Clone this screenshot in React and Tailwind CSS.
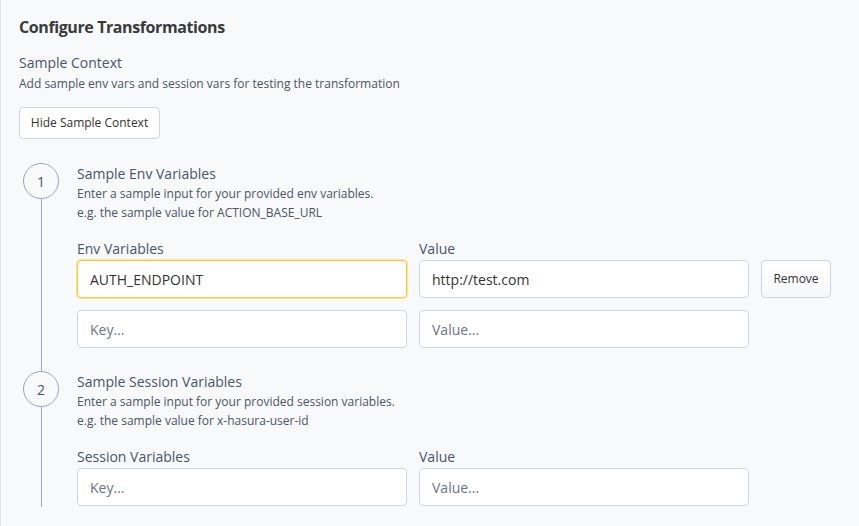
import React from "react";

const font = { fontFamily: "'Open Sans', 'Noto Sans', sans-serif" };

function Input({ value, placeholder, focused }) {
  return (
    <div
      className={
        "h-[38px] rounded-[4px] bg-white flex items-center px-[12px] text-[14px] " +
        (focused
          ? "border border-[#f5c842] shadow-[0_0_0_1px_#fde68a]"
          : "border border-[#cfd6e2]")
      }
    >
      {value ? (
        <span className="text-[#333333]">{value}</span>
      ) : (
        <span className="text-[#6b7488]">{placeholder}</span>
      )}
    </div>
  );
}

function Step({ n, title, desc1, desc2, label, last, children }) {
  return (
    <div className="flex">
      <div className="w-[44px] flex flex-col items-center shrink-0">
        <div className="w-[36px] h-[36px] rounded-full border border-[#9aa6bb] flex items-center justify-center text-[14px] text-[#4a5568] bg-[#f8f9fb] shrink-0">
          {n}
        </div>
        <div className={"w-px bg-[#a0aabb] flex-1" + (last ? " mb-[-1px]" : "")} />
      </div>
      <div className={"ml-[14px] flex-1 " + (last ? "pb-0" : "pb-[23px]")}>
        <div className="text-[14px] leading-[20px] text-[#4a5568] pt-px">{title}</div>
        <div className="text-[12px] leading-[19px] text-[#4a5568]">{desc1}</div>
        <div className="text-[12px] leading-[19px] text-[#4a5568]">{desc2}</div>
        <div className="mt-[17px] grid grid-cols-[330px_330px_70px] gap-x-[12px]">
          <div className="text-[14px] leading-[20px] text-[#4a5568]">{label}</div>
          <div className="text-[14px] leading-[20px] text-[#4a5568]">Value</div>
          <div />
        </div>
        <div className="mt-[1px] grid grid-cols-[330px_330px_70px] gap-x-[12px] gap-y-[12px]">
          {children}
        </div>
      </div>
    </div>
  );
}

export default function App() {
  return (
    <div
      style={font}
      className="w-[859px] h-[526px] bg-[#f8f9fb] border-l border-[#e2e5ea] pl-[18px] pt-[15px] overflow-hidden"
    >
      <div className="text-[16px] leading-[24px] font-bold tracking-[-0.4px] text-[#3a3a3a]">
        Configure Transformations
      </div>
      <div className="mt-[14px] text-[14px] leading-[20px] text-[#4a5568]">Sample Context</div>
      <div className="mt-[3px] text-[12px] leading-[16px] text-[#4a5568]">
        Add sample env vars and session vars for testing the transformation
      </div>
      <div className="mt-[15px]">
        <button className="h-[32px] w-[141px] rounded-[4px] bg-white border border-[#cfd6e2] text-[12px] text-[#333333]">
          Hide Sample Context
        </button>
      </div>
      <div className="mt-[24px]">
        <Step
          n="1"
          title="Sample Env Variables"
          desc1="Enter a sample input for your provided env variables."
          desc2="e.g. the sample value for ACTION_BASE_URL"
          label="Env Variables"
        >
          <Input value="AUTH_ENDPOINT" focused />
          <Input value="http://test.com" />
          <button className="h-[38px] rounded-[4px] bg-gradient-to-b from-white to-[#f7f8fa] border border-[#cfd6e2] text-[12px] text-[#333333]">
            Remove
          </button>
          <Input placeholder="Key..." />
          <Input placeholder="Value..." />
          <div />
        </Step>
        <Step
          n="2"
          title="Sample Session Variables"
          desc1="Enter a sample input for your provided session variables."
          desc2="e.g. the sample value for x-hasura-user-id"
          label="Session Variables"
          last
        >
          <Input placeholder="Key..." />
          <Input placeholder="Value..." />
          <div />
        </Step>
      </div>
    </div>
  );
}
